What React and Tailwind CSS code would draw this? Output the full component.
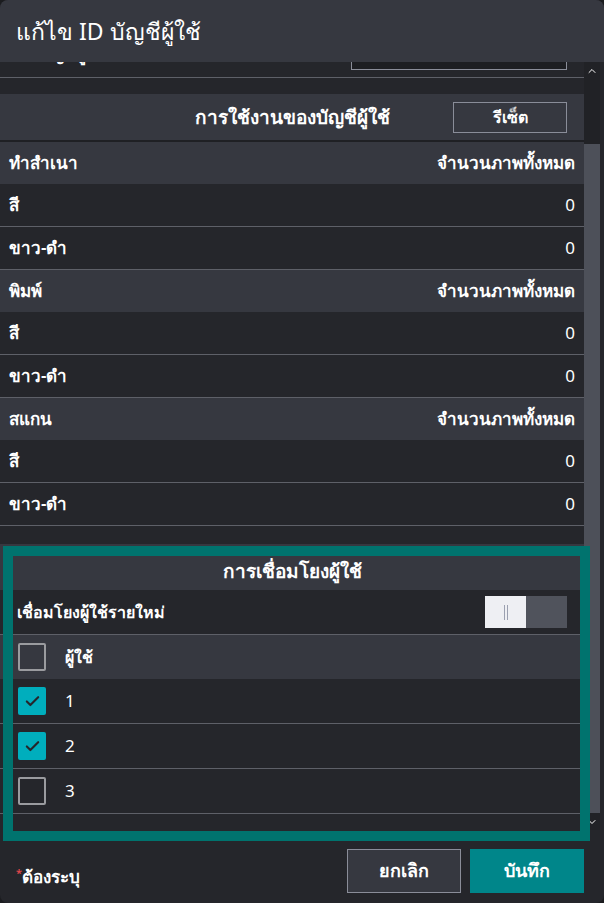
import { Check, ChevronUp, ChevronDown } from "lucide-react";

const groups = [
  { name: "ทำสำเนา", rows: [["สี", 0], ["ขาว-ดำ", 0]] },
  { name: "พิมพ์", rows: [["สี", 0], ["ขาว-ดำ", 0]] },
  { name: "สแกน", rows: [["สี", 0], ["ขาว-ดำ", 0]] },
];

const users = [
  { id: 1, checked: true },
  { id: 2, checked: true },
  { id: 3, checked: false },
];

function Checkbox({ checked }) {
  if (checked) {
    return (
      <div className="w-[28px] h-[28px] rounded-[2px] bg-[#00aebd] flex items-center justify-center">
        <Check className="w-[17px] h-[17px] text-[#25262b]" strokeWidth={3} />
      </div>
    );
  }
  return <div className="w-[28px] h-[28px] rounded-[2px] border-2 border-[#9a9b9f]" />;
}

export default function App() {
  return (
    <div
      className="bg-[#1b1c1f] w-[604px] h-[903px]"
      style={{ fontFamily: '"Noto Sans", "Liberation Sans", sans-serif' }}
    >
      <div className="relative w-[604px] h-[903px] bg-[#25262b] rounded-[8px] overflow-hidden flex flex-col text-white">
        {/* Header */}
        <div className="h-[62px] shrink-0 bg-[#363840] flex items-center px-[16px]">
          <h1 className="text-[23px]">แก้ไข ID บัญชีผู้ใช้</h1>
        </div>

        {/* Scroll area */}
        <div className="h-[768px] shrink-0 flex">
          <div className="w-[584px] overflow-hidden">
            {/* partially scrolled row */}
            <div className="h-[16px] overflow-hidden flex flex-col justify-end border-b border-[#5e6068]">
              <div className="h-[32px] shrink-0 flex items-start justify-between pl-[16px] pr-[17px]">
                <span className="text-[17px] leading-[18px] font-semibold">ID บัญชีผู้ใช้</span>
                <div className="w-[216px] h-[25px] bg-[#1d1e22] border border-[#8a8d99]" />
              </div>
            </div>

            <div className="h-[16px]" />

            {/* Usage section */}
            <div className="h-[48px] bg-[#363840] border-b-2 border-[#1f2024] grid grid-cols-[1fr_auto_1fr] items-center">
              <div />
              <span className="text-[19px] font-semibold">การใช้งานของบัญชีผู้ใช้</span>
              <button className="justify-self-end mr-[17px] w-[114px] h-[31px] border border-[#8a8d99] text-[16px] font-semibold">
                รีเซ็ต
              </button>
            </div>

            {groups.map((g) => (
              <div key={g.name}>
                <div className="h-[42px] bg-[#363840] flex items-center justify-between pl-[9px] pr-[9px] text-[17px] font-semibold">
                  <span>{g.name}</span>
                  <span>จำนวนภาพทั้งหมด</span>
                </div>
                {g.rows.map(([label, value]) => (
                  <div
                    key={label}
                    className="h-[43px] border-b border-[#5e6068] flex items-center justify-between pl-[9px] pr-[9px] text-[17px] font-semibold"
                  >
                    <span>{label}</span>
                    <span className="text-[17px] font-normal">{value}</span>
                  </div>
                ))}
              </div>
            ))}

            <div className="h-[18px]" />

            {/* User link section */}
            <div className="h-[46px] bg-[#363840] flex items-center justify-center pt-[8px]">
              <span className="text-[19px] font-semibold">การเชื่อมโยงผู้ใช้</span>
            </div>
            <div className="h-[45px] border-b border-[#5e6068] flex items-center justify-between pl-[17px] pr-[17px]">
              <span className="text-[16px] font-semibold">เชื่อมโยงผู้ใช้รายใหม่</span>
              <div className="w-[82px] h-[32px] flex">
                <div className="w-[41px] bg-[#eeeff3] flex items-center justify-center gap-[2px]">
                  <div className="w-px h-[15px] bg-[#9ba0b0]" />
                  <div className="w-px h-[15px] bg-[#9ba0b0]" />
                </div>
                <div className="flex-1 bg-[#50535c]" />
              </div>
            </div>
            <div className="h-[44px] bg-[#363840] flex items-center gap-[19px] pl-[18px]">
              <Checkbox checked={false} />
              <span className="text-[16px] font-semibold">ผู้ใช้</span>
            </div>
            {users.map((u) => (
              <div
                key={u.id}
                className="h-[45px] border-b border-[#5e6068] flex items-center gap-[19px] pl-[18px]"
              >
                <Checkbox checked={u.checked} />
                <span className="text-[17px]">{u.id}</span>
              </div>
            ))}
          </div>

          {/* Scrollbar */}
          <div className="w-[16px] bg-[#212226] flex flex-col items-center">
            <ChevronUp className="w-[12px] h-[12px] mt-[3px] text-white" strokeWidth={2} />
            <div className="h-[67px]" />
            <div className="w-[16px] h-[669px] bg-[#4d5059]" />
            <ChevronDown className="w-[12px] h-[12px] mt-[3px] text-white" strokeWidth={2} />
          </div>
        </div>

        {/* Footer */}
        <div className="flex-1 flex items-center justify-between pl-[16px] pr-[20px] pt-[8px]">
          <span className="text-[17px] font-semibold mt-[12px]">
            <sup className="text-[#e0454a] text-[11px]">*</sup>ต้องระบุ
          </span>
          <div className="flex gap-[9px]">
            <button className="w-[114px] h-[44px] bg-[#363840] border border-[#8a8d99] text-[18px] font-semibold">
              ยกเลิก
            </button>
            <button className="w-[114px] h-[44px] bg-[#00868a] text-[18px] font-semibold">
              บันทึก
            </button>
          </div>
        </div>

        {/* Highlight overlay */}
        <div className="absolute left-[3px] top-[546px] w-[587px] h-[295px] border-[10px] border-[#00736e] pointer-events-none" />
      </div>
    </div>
  );
}
